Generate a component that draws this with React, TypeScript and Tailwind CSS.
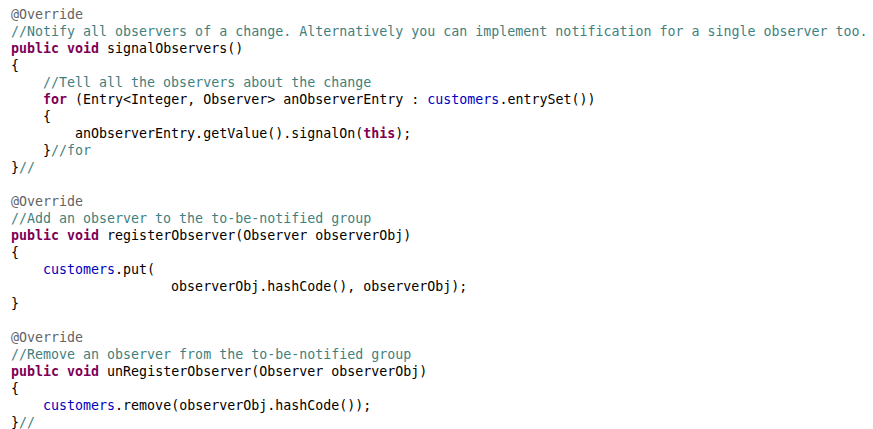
import React from 'react';

type Tok = [string, string?];

const K = 'kw';
const C = 'cm';
const A = 'an';
const F = 'fd';

const lines: Tok[][] = [
  [['@Override', A]],
  [['//Notify all observers of a change. Alternatively you can implement notification for a single observer too.', C]],
  [['public', K], [' '], ['void', K], [' signalObservers()']],
  [['{']],
  [['    '], ['//Tell all the observers about the change', C]],
  [['    '], ['for', K], [' (Entry<Integer, Observer> anObserverEntry : '], ['customers', F], ['.entrySet())']],
  [['    {']],
  [['        anObserverEntry.getValue().signalOn('], ['this', K], [');']],
  [['    }'], ['//for', C]],
  [['}'], ['//', C]],
  [['']],
  [['@Override', A]],
  [['//Add an observer to the to-be-notified group', C]],
  [['public', K], [' '], ['void', K], [' registerObserver(Observer observerObj)']],
  [['{']],
  [['    '], ['customers', F], ['.put(']],
  [['                    observerObj.hashCode(), observerObj);']],
  [['}']],
  [['']],
  [['@Override', A]],
  [['//Remove an observer from the to-be-notified group', C]],
  [['public', K], [' '], ['void', K], [' unRegisterObserver(Observer observerObj)']],
  [['{']],
  [['    '], ['customers', F], ['.remove(observerObj.hashCode());']],
  [['}'], ['//', C]],
];

const cls: Record<string, string> = {
  kw: 'text-[#7f0055] font-bold',
  cm: 'text-[#3f7f7f]',
  an: 'text-[#646464]',
  fd: 'text-[#0000c0]',
};

export default function App() {
  return (
    <div className="w-[873px] h-[429px] overflow-hidden bg-white">
      <pre className="pl-[11px] pt-[6px] font-['DejaVu_Sans_Mono',monospace] text-[13.3px] leading-[17px] text-black">
        {lines.map((line, i) => (
          <div key={i} className="h-[17px]">
            {line.map(([text, kind], j) => (
              <span key={j} className={kind ? cls[kind] : ''}>
                {text}
              </span>
            ))}
          </div>
        ))}
      </pre>
    </div>
  );
}
